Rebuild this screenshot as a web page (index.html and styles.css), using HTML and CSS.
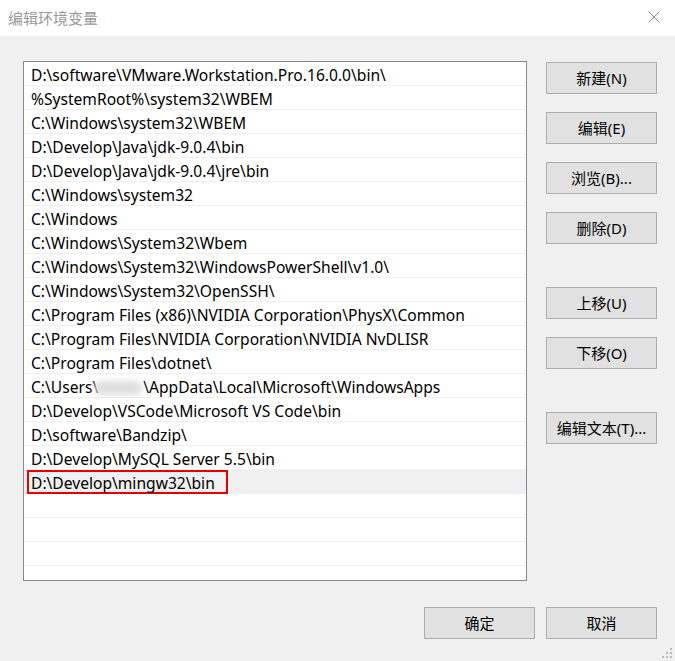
FILE: index.html
```html
<!DOCTYPE html>
<html lang="zh-CN">
<head>
    <meta charset="UTF-8">
    <title>编辑环境变量</title>
    <link rel="stylesheet" href="styles.css">
</head>
<body>
    <div class="dialog">
        <div class="titlebar">
            <span class="title">编辑环境变量</span>
            <svg class="close" width="12" height="12" viewBox="0 0 12 12">
                <path d="M0.5 0.5 L11.5 11.5 M11.5 0.5 L0.5 11.5" stroke="#8c8c8c" stroke-width="1" fill="none"/>
            </svg>
        </div>
        <div class="content">
            <div class="main">
                <ul class="pathlist">
                    <li><span>D:\software\VMware.Workstation.Pro.16.0.0\bin\</span></li>
                    <li><span>%SystemRoot%\system32\WBEM</span></li>
                    <li><span>C:\Windows\system32\WBEM</span></li>
                    <li><span>D:\Develop\Java\jdk-9.0.4\bin</span></li>
                    <li><span>D:\Develop\Java\jdk-9.0.4\jre\bin</span></li>
                    <li><span>C:\Windows\system32</span></li>
                    <li><span>C:\Windows</span></li>
                    <li><span>C:\Windows\System32\Wbem</span></li>
                    <li><span>C:\Windows\System32\WindowsPowerShell\v1.0\</span></li>
                    <li><span>C:\Windows\System32\OpenSSH\</span></li>
                    <li><span>C:\Program Files (x86)\NVIDIA Corporation\PhysX\Common</span></li>
                    <li><span>C:\Program Files\NVIDIA Corporation\NVIDIA NvDLISR</span></li>
                    <li><span>C:\Program Files\dotnet\</span></li>
                    <li><span>C:\Users\<i class="blurred"></i>\AppData\Local\Microsoft\WindowsApps</span></li>
                    <li><span>D:\Develop\VSCode\Microsoft VS Code\bin</span></li>
                    <li><span>D:\software\Bandzip\</span></li>
                    <li><span>D:\Develop\MySQL Server 5.5\bin</span></li>
                    <li class="selected"><span>D:\Develop\mingw32\bin</span></li>
                    <li></li>
                    <li></li>
                    <li></li>
                    <li></li>
                </ul>
                <div class="side">
                    <button>新建(N)</button>
                    <button>编辑(E)</button>
                    <button>浏览(B)...</button>
                    <button>删除(D)</button>
                    <button class="group">上移(U)</button>
                    <button>下移(O)</button>
                    <button class="group">编辑文本(T)...</button>
                </div>
            </div>
            <div class="footer">
                <button>确定</button>
                <button>取消</button>
            </div>
            <svg class="grip" width="10" height="10" viewBox="0 0 10 10">
                <rect x="8" y="0" width="2" height="2" fill="#bcbcbc"/>
                <rect x="4" y="4" width="2" height="2" fill="#bcbcbc"/>
                <rect x="8" y="4" width="2" height="2" fill="#bcbcbc"/>
                <rect x="0" y="8" width="2" height="2" fill="#bcbcbc"/>
                <rect x="4" y="8" width="2" height="2" fill="#bcbcbc"/>
                <rect x="8" y="8" width="2" height="2" fill="#bcbcbc"/>
            </svg>
        </div>
    </div>
</body>
</html>
```

FILE: styles.css
```css
body {
    margin: 0;
    padding: 0;
    font-family: "Noto Sans", "Noto Sans CJK SC", sans-serif;
    font-size: 15px;
    color: #000;
    background: #f0f0f0;
}
.dialog {
    width: 675px;
    height: 661px;
    display: flex;
    flex-direction: column;
    background: #f0f0f0;
}
.titlebar {
    height: 36px;
    background: #fff;
    display: flex;
    align-items: center;
    justify-content: space-between;
    padding: 0 15px 2px 8px;
    box-sizing: border-box;
}
.title {
    color: #999;
    font-family: "Noto Sans CJK SC", sans-serif;
    font-size: 15px;
}
.content {
    flex: 1;
    position: relative;
    padding: 25px 18px 0 23px;
}
.main {
    display: flex;
}
.pathlist {
    list-style: none;
    margin: 0;
    padding: 0;
    width: 504px;
    height: 520px;
    box-sizing: border-box;
    border: 1px solid #828790;
    background: #fff;
    overflow: hidden;
    font-size: 15.6px;
}
.pathlist li {
    height: 24px;
    box-sizing: border-box;
    border-bottom: 1px solid #f0f0f0;
    padding-left: 3px;
    white-space: nowrap;
}
.pathlist li span {
    display: inline-block;
    height: 24px;
    line-height: 23px;
    box-sizing: border-box;
    padding: 0 2px;
    border: 2px solid transparent;
}
.pathlist li.selected {
    background: #f0f0f0;
}
.pathlist li.selected span {
    border-color: #e50000;
    padding-right: 11px;
}
.blurred {
    display: inline-block;
    width: 48px;
    height: 14px;
    margin-left: -4px;
    margin-right: 1px;
    vertical-align: -2px;
    background: #dedede;
    border-radius: 7px;
    filter: blur(3px);
}
.side {
    display: flex;
    flex-direction: column;
    gap: 18px;
    margin-left: 19px;
    padding-top: 1px;
}
button {
    width: 111px;
    height: 32px;
    background: #e1e1e1;
    border: 1px solid #adadad;
    font-family: "Noto Sans", "Noto Sans CJK SC", sans-serif;
    font-size: 15px;
    color: #000;
    padding: 0 0 2px;
    margin: 0;
}
.side .group {
    margin-top: 25px;
}
.footer {
    display: flex;
    justify-content: flex-end;
    gap: 11px;
    margin-top: 26px;
}
.grip {
    position: absolute;
    right: 3px;
    bottom: 3px;
}
```
